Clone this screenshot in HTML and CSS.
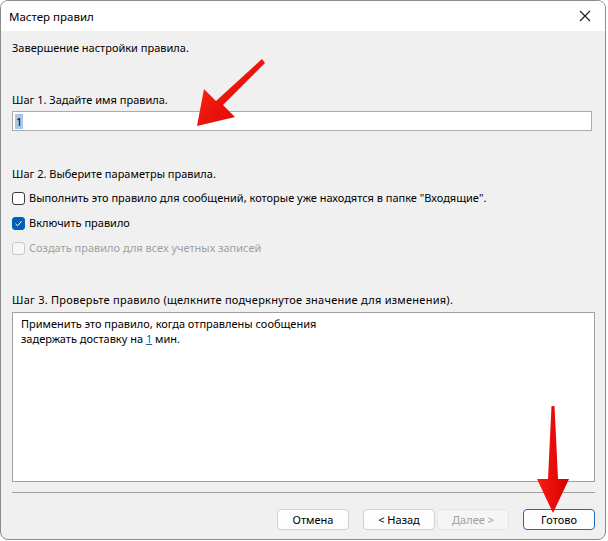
FILE: index.html
```html
<!DOCTYPE html>
<html>

<head>
    <link rel="stylesheet" href="styles.css">
</head>

<body>
    <div class="window">
        <div class="titlebar">
            <span class="title">Мастер правил</span>
            <svg class="close" width="12" height="12" viewBox="0 0 12 12">
                <path d="M1 1 L11 11 M11 1 L1 11" stroke="#1a1a1a" stroke-width="1.1" fill="none" />
            </svg>
        </div>

        <div class="content">
            <div class="subtitle">Завершение настройки правила.</div>

            <div class="step step-name">
                <div class="step-label">Шаг 1. Задайте имя правила.</div>
                <div class="name-input"><span class="selected">1</span></div>
            </div>

            <div class="step step-options">
                <div class="step-label">Шаг 2. Выберите параметры правила.</div>
                <div class="option">
                    <span class="check"></span>
                    <span>Выполнить это правило для сообщений, которые уже находятся в папке "Входящие".</span>
                </div>
                <div class="option">
                    <span class="check checked">
                        <svg width="9" height="9" viewBox="0 0 9 9">
                            <path d="M1.5 4.8 L3.6 6.8 L7.6 2.2" stroke="#fff" stroke-width="1" fill="none" />
                        </svg>
                    </span>
                    <span>Включить правило</span>
                </div>
                <div class="option disabled">
                    <span class="check"></span>
                    <span>Создать правило для всех учетных записей</span>
                </div>
            </div>

            <div class="step step-review">
                <div class="step-label wide">Шаг 3. Проверьте правило (щелкните подчеркнутое значение для изменения).</div>
                <div class="rule-box">
                    <div>Применить это правило, когда отправлены сообщения</div>
                    <div>задержать доставку на <a class="rule-link">1</a> мин.</div>
                </div>
            </div>

            <div class="separator"></div>

            <div class="buttons">
                <button class="btn">Отмена</button>
                <div class="btn-pair">
                    <button class="btn">&lt; Назад</button>
                    <button class="btn" disabled>Далее &gt;</button>
                </div>
                <button class="btn btn-default">Готово</button>
            </div>
        </div>

        <svg class="arrows" width="606" height="540" viewBox="0 0 606 540">
            <defs>
                <linearGradient id="red1" x1="0" y1="0" x2="1" y2="1">
                    <stop offset="0" stop-color="#ff2a1a" />
                    <stop offset="1" stop-color="#d80000" />
                </linearGradient>
                <linearGradient id="red2" x1="0" y1="0" x2="1" y2="0">
                    <stop offset="0" stop-color="#ff1a10" />
                    <stop offset="1" stop-color="#d00000" />
                </linearGradient>
            </defs>
            <path d="M261 58 L264 62 L222 104 L234 116 L196 125 L203 88 L215 100 Z" fill="url(#red1)" />
            <path d="M550.5 405 L553.5 405 L557 478 L568 478 L552 512 L536 478 L547 478 Z" fill="url(#red2)" />
        </svg>
    </div>
</body>

</html>
```

FILE: styles.css
```css
body {
    margin: 0;
    background-color: #fff;
    font-family: "Noto Sans", "Open Sans", sans-serif;
    font-size: 11px;
    color: #000;
}

.window {
    position: relative;
    width: 604px;
    height: 538px;
    border: 1px solid #8c8c8c;
    border-radius: 8px;
    background-color: #f0f0f0;
    overflow: hidden;
}

.titlebar {
    height: 30px;
    background-color: #fff;
    display: flex;
    align-items: center;
    justify-content: space-between;
    padding: 0 14px 0 8px;
}

.title {
    font-size: 11.5px;
}

.content {
    padding: 9px 10px 0 11px;
    display: flex;
    flex-direction: column;
}

.subtitle {
    line-height: 16px;
}

.step-label {
    line-height: 16px;
}

.step-label.wide {
    letter-spacing: 0.25px;
}

.step-name {
    margin-top: 36px;
}

.name-input {
    margin-top: 3px;
    margin-right: 3px;
    height: 18px;
    border: 1px solid #ababab;
    background-color: #fff;
    display: flex;
    align-items: center;
    padding-left: 2px;
}

.selected {
    background-color: #a8c7ea;
    line-height: 15px;
    padding: 0 1px;
}

.step-options {
    margin-top: 35px;
}

.option {
    display: flex;
    align-items: center;
    gap: 4px;
    height: 16px;
    margin-top: 8px;
    line-height: 16px;
}

.option + .option {
    margin-top: 9px;
}

.check {
    width: 11px;
    height: 11px;
    border: 1px solid #3c3c3c;
    border-radius: 3px;
    background-color: #fff;
    display: flex;
    align-items: center;
    justify-content: center;
}

.check.checked {
    background-color: #005fb8;
    border-color: #005fb8;
}

.option.disabled {
    color: #a0a0a0;
}

.option.disabled .check {
    border-color: #c8c8c8;
    background-color: #f6f6f6;
}

.step-review {
    margin-top: 36px;
}

.rule-box {
    margin-top: 4px;
    height: 165px;
    border: 1px solid #a0a0a0;
    background-color: #fff;
    padding: 3px 8px 0 8px;
    line-height: 15px;
}

.rule-link {
    color: #1c5fa8;
    text-decoration: underline;
}

.separator {
    margin-top: 10px;
    height: 1px;
    background-color: #a0a0a0;
}

.buttons {
    margin-top: 16px;
    display: flex;
    justify-content: flex-end;
    gap: 14px;
}

.btn-pair {
    display: flex;
    gap: 2px;
}

.btn {
    width: 72px;
    height: 21px;
    padding: 0;
    font-family: inherit;
    font-size: 11px;
    color: #000;
    background-color: #fdfdfd;
    border: 1px solid #d0d0d0;
    border-radius: 4px;
}

.btn:disabled {
    color: #a0a0a0;
    background-color: #f5f5f5;
    border-color: #e5e5e5;
}

.btn-default {
    border-color: #1f6bb5;
}

.arrows {
    position: absolute;
    left: 0;
    top: 0;
    pointer-events: none;
}
```
